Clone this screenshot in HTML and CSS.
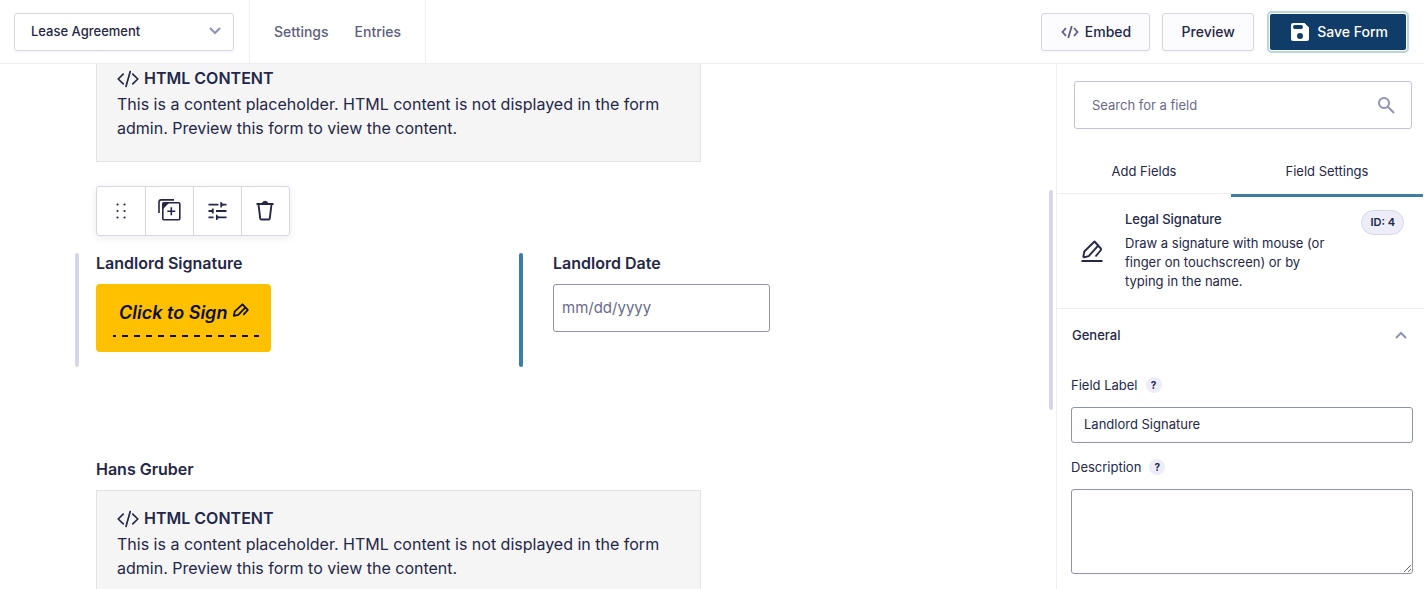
FILE: index.html
```html
<!DOCTYPE html>
<html lang="en">
<head>
<meta charset="utf-8">
<title>Lease Agreement - Form Editor</title>
<link rel="stylesheet" href="styles.css">
</head>
<body>
<svg class="sprite" aria-hidden="true">
  <symbol id="code" viewBox="0 0 22 18"><path d="M6.200 4.200 1.200 9l5 4.800M15.800 4.200l5 4.800-5 4.800M13.200 1.500 9 16.500" fill="none" stroke="currentColor" stroke-width="1.700" stroke-linecap="round" stroke-linejoin="round"/></symbol>
  <symbol id="pen" viewBox="0 0 17 15"><path d="M1.800 12.800 2.800 8.300 10.500 1.300 15.800 6.800 11.800 11.300M1.800 12.800l4.500-1L13 4.800" fill="none" stroke="currentColor" stroke-width="1.800" stroke-linecap="round" stroke-linejoin="round"/></symbol>
</svg>
<header class="topbar">
  <div class="switcher">
    <button class="form-select" type="button">Lease Agreement
      <svg width="12" height="8" viewBox="0 0 12 8"><path d="M1 1l5 5 5-5" fill="none" stroke="#9092b2" stroke-width="2"/></svg>
    </button>
  </div>
  <nav class="topnav">
    <a href="#settings">Settings</a>
    <a href="#entries">Entries</a>
  </nav>
  <div class="actions">
    <button class="btn" type="button"><svg class="btn-code" width="18" height="14" viewBox="0 0 18 14"><path d="M5 3 1.500 7 5 11M13 3l3.500 4L13 11M10.800 1 7.200 13" fill="none" stroke="currentColor" stroke-width="1.800"/></svg>Embed</button>
    <button class="btn" type="button">Preview</button>
    <button class="btn btn-primary" type="button"><svg width="18" height="18" viewBox="0 0 18 18"><path fill="#fff" fill-rule="evenodd" d="M2 0h11.500L18 4.500V16a2 2 0 0 1-2 2H2a2 2 0 0 1-2-2V2a2 2 0 0 1 2-2ZM4 2a2 2 0 0 0 0 4h6a2 2 0 0 0 0-4ZM9 10a3 3 0 1 0 0 6 3 3 0 0 0 0-6Z"/></svg>Save Form</button>
  </div>
</header>
<div class="workspace">
  <main class="canvas">
    <div class="form">
      <section class="html-block">
        <h2><svg width="22" height="18"><use href="#code"/></svg>HTML CONTENT</h2>
        <p>This is a content placeholder. HTML content is not displayed in the form admin. Preview this form to view the content.</p>
      </section>
      <div class="toolbar">
        <button type="button" aria-label="Move"><svg width="24" height="24" viewBox="0 0 24 24" fill="currentColor"><circle cx="8.500" cy="5.500" r="1.100"/><circle cx="15.500" cy="5.500" r="1.100"/><circle cx="8.500" cy="12" r="1.100"/><circle cx="15.500" cy="12" r="1.100"/><circle cx="8.500" cy="18.500" r="1.100"/><circle cx="15.500" cy="18.500" r="1.100"/></svg></button>
        <button type="button" aria-label="Duplicate"><svg width="24" height="24" viewBox="1 1 24 24" fill="none" stroke="currentColor" stroke-width="1.600"><rect x="5.800" y="4.800" width="17" height="17" rx="1"/><path d="M2 15V4Q2 1.900 4.200 1.900H17M14.300 9.300v8M10.300 13.300h8"/><path d="M6 5h6L6 11z" fill="currentColor" stroke="none"/></svg></button>
        <button type="button" aria-label="Settings"><svg width="24" height="24" viewBox="1 0 24 24" fill="none" stroke="currentColor" stroke-width="1.800"><path d="M3.500 5.700h10M17.500 5.700h4M3.500 12h4M11 12h10.500M3.500 18.300h5M12 18.300h9.500"/><path d="M16 3v5.400M8 9.400v5.200M11.700 15.700v5.200" stroke-width="1.400"/><path d="M16 3.300l3 2.400-3 2.400zM8 9.600 5 12l3 2.400zM11.500 16l3 2.300-3 2.300z" fill="currentColor" stroke="none"/></svg></button>
        <button type="button" aria-label="Delete"><svg width="24" height="24" viewBox="1 0 24 24" fill="none" stroke="currentColor" stroke-width="1.900"><path d="M3.500 5h17M5.500 5.500l1.700 13.700Q7.300 20.500 8.500 20.500h7Q16.700 20.500 16.800 19.200L18.500 5.500"/><path d="M8.500 4.500q1-2.800 3.500-2.800t3.500 2.800z" fill="currentColor" stroke="none"/></svg></button>
      </div>
      <div class="field-row">
        <section class="field">
          <h3 id="signature">Landlord Signature</h3>
          <button class="sign" type="button" aria-describedby="signature"><span>Click to Sign <svg width="17" height="15"><use href="#pen"/></svg></span>
            <svg class="dashes" height="2"><line x1="0" y1="1" x2="100%" y2="1" stroke="#0d1030" stroke-width="2" stroke-dasharray="6 6" stroke-dashoffset="3"/></svg>
          </button>
        </section>
        <section class="field active">
          <label for="date">Landlord Date</label>
          <input id="date" type="text" placeholder="mm/dd/yyyy">
        </section>
      </div>
      <h3 class="party">Hans Gruber</h3>
      <section class="html-block">
        <h2><svg width="22" height="18"><use href="#code"/></svg>HTML CONTENT</h2>
        <p>This is a content placeholder. HTML content is not displayed in the form admin. Preview this form to view the content.</p>
      </section>
    </div>
    <div class="thumb"></div>
  </main>
  <aside class="sidebar">
    <div class="search">
      <input type="search" aria-label="Search for a field" placeholder="Search for a field">
      <svg width="18" height="18" viewBox="0 0 18 18" fill="none" stroke="#9092b2" stroke-width="2"><circle cx="7" cy="7" r="5"/><path d="M10.500 10.500 17 17"/></svg>
    </div>
    <div class="tabs" role="tablist">
      <button type="button" role="tab" aria-selected="false">Add Fields</button>
      <button type="button" role="tab" aria-selected="true">Field Settings</button>
    </div>
    <section class="summary">
      <svg width="22" height="24" viewBox="0 0 22 24"><path d="M2.200 17.500 3.300 11.500 13.500 1.500 19.800 8.500 20 10 14.500 16.500M2.200 17.500l5.500-1.300 9-10" fill="none" stroke="currentColor" stroke-width="1.900" stroke-linejoin="round"/><path d="M.5 21h21" stroke="currentColor" stroke-width="2"/></svg>
      <div>
        <h4>Legal Signature</h4>
        <p>Draw a signature with mouse (or finger on touchscreen) or by typing in the name.</p>
      </div>
      <span class="badge">ID: 4</span>
    </section>
    <button class="accordion" type="button" aria-expanded="true">General
      <svg width="12" height="8" viewBox="0 0 12 8"><path d="M1 7l5-5 5 5" fill="none" stroke="#9092b2" stroke-width="2"/></svg>
    </button>
    <div class="settings">
      <div class="label"><label for="field-label">Field Label</label><button type="button" class="help" aria-label="Help">?</button></div>
      <input id="field-label" type="text" value="Landlord Signature">
      <div class="label"><label for="description">Description</label><button type="button" class="help" aria-label="Help">?</button></div>
      <textarea id="description"></textarea>
    </div>
  </aside>
</div>
</body>
</html>
```
FILE: styles.css
```css
* { box-sizing: border-box; }
body {
  margin: 0;
  height: 100vh;
  display: flex;
  flex-direction: column;
  overflow: hidden;
  background: #fff;
  color: #242748;
  font-family: Inter, "Liberation Sans", sans-serif;
  font-size: 13px;
}
button, input, textarea { font: inherit; color: inherit; }
button { cursor: pointer; padding: 0; border: 0; background: none; }
h2, h3, h4, p { margin: 0; }
svg { flex: none; }
.sprite { position: absolute; width: 0; height: 0; }

.topbar {
  flex: none;
  display: flex;
  height: 64px;
  border-bottom: 1px solid #ecedf8;
}
.switcher {
  display: flex;
  align-items: center;
  padding: 0 15px 0 14px;
  border-right: 1px solid #ecedf8;
}
.form-select {
  display: flex;
  align-items: center;
  justify-content: space-between;
  width: 220px;
  height: 38px;
  padding: 0 12px 2px 16px;
  border: 1px solid #d5d7e9;
  border-radius: 3px;
  box-shadow: 0 1px 2px #1214360d;
  font-weight: 500;
}
.topnav {
  display: flex;
  align-items: center;
  gap: 26px;
  padding: 0 24px;
  border-right: 1px solid #ecedf8;
  font-size: 14px;
  font-weight: 500;
}
.topnav a { color: #5b5e80; text-decoration: none; }
.actions {
  display: flex;
  align-items: center;
  gap: 12px;
  margin-left: auto;
  padding-right: 18px;
}
.btn {
  display: flex;
  align-items: center;
  justify-content: center;
  gap: 6px;
  min-width: 92px;
  height: 38px;
  padding: 0 18px;
  border: 1px solid #d5d7e9;
  border-radius: 3px;
  background: #fcfcff;
  box-shadow: 0 1px 2px #1214360d;
  font-size: 14px;
  font-weight: 500;
}
.btn-code { color: #5b5e80; margin-left: 1px; }
.btn-primary {
  gap: 8px;
  height: 36px;
  margin-left: 4px;
  padding: 0 18px 0 21px;
  border: 0;
  border-radius: 2px;
  background: #0f3c69;
  color: #fff;
  box-shadow: 0 0 0 1px #fff, 0 0 0 3px #b8d5ea;
}

.workspace { flex: 1; display: flex; min-height: 0; }
.canvas { position: relative; flex: 1; min-width: 0; overflow: hidden; }
.form { margin-top: -14px; padding: 0 355px 0 96px; }
.thumb {
  position: absolute;
  top: 126px;
  right: 3px;
  width: 4px;
  height: 220px;
  border-radius: 2px;
  background: #d5d7e9;
}
.html-block {
  height: 112px;
  padding: 15px 20px;
  border: 1px solid #e2e2e4;
  background: #f5f5f5;
  font-size: 16px;
  line-height: 24px;
}
.html-block h2 {
  display: flex;
  align-items: center;
  gap: 5px;
  margin-bottom: 2px;
  font-size: 16px;
  font-weight: 600;
}
.html-block h2 svg { margin-top: 2px; }
.toolbar {
  display: inline-flex;
  height: 50px;
  margin: 24px 0 17px;
  border: 1px solid #d5d7e9;
  border-radius: 3px;
  box-shadow: 0 2px 8px #12143614;
}
.toolbar button { display: grid; place-items: center; width: 48px; }
.toolbar button + button { border-left: 1px solid #d5d7e9; }
.field-row {
  display: grid;
  grid-template-columns: 444px 251px;
  margin-left: -21px;
}
.field {
  position: relative;
  display: flex;
  flex-direction: column;
  align-items: flex-start;
  gap: 11px;
  height: 114px;
  padding-left: 21px;
}
.field::before {
  content: "";
  position: absolute;
  inset: 0 auto 0 0;
  width: 4px;
  border-radius: 2px;
  background: #d5d7e9;
}
.field.active { padding-left: 34px; }
.field.active::before { background: #3e7da6; }
h3, .field label { font-size: 16px; font-weight: 600; line-height: 20px; }
.field input {
  width: 217px;
  height: 48px;
  padding: 0 8px 2px;
  border: 1px solid #9092b2;
  border-radius: 3px;
  font-size: 15px;
}
input::placeholder { color: #686a8b; opacity: 1; }
.sign {
  width: 175px;
  height: 68px;
  padding: 10px 12px 8px 17px;
  border-radius: 4px;
  background: #ffc000;
  color: #0d1030;
  font-size: 18px;
  font-style: italic;
  font-weight: 600;
}
.sign span { display: block; padding-right: 4px; line-height: 24px; }
.sign span svg { vertical-align: 1px; }
.sign .dashes { display: block; width: 100%; margin-top: 10px; }
.party { margin: 92px 0 11px; }

.sidebar {
  flex: none;
  width: 368px;
  border-left: 1px solid #ecedf8;
}
.search {
  display: flex;
  align-items: center;
  height: 48px;
  margin: 17px 12px 0 17px;
  padding: 0 16px 0 17px;
  border: 1px solid #c2c3db;
  border-radius: 3px;
}
.search input {
  flex: 1;
  min-width: 0;
  padding: 0;
  border: 0;
  outline: 0;
  background: none;
}
.tabs {
  display: grid;
  grid-template-columns: 174fr 192fr;
  height: 68px;
  padding-right: 1px;
}
.tabs button { padding-top: 20px; border-bottom: 1px solid #ecedf8; margin-bottom: 3px; }
.tabs [aria-selected="true"] { margin-bottom: 0; padding-top: 18px; border-bottom: 3px solid #3e7da6; }
.summary {
  display: flex;
  align-items: flex-start;
  height: 112px;
  padding: 13px 20px 0 24px;
  border-bottom: 1px solid #ecedf8;
}
.summary > svg { margin-top: 30px; }
.summary > div { flex: 1; padding: 0 32px 0 22px; }
.summary h4 { margin-bottom: 5px; font-size: 13px; font-weight: 500; line-height: 19px; }
.summary p { line-height: 19px; }
.badge {
  padding: 0 8px;
  border: 1px solid #d5d7e9;
  border-radius: 13px;
  background: #ecedf8;
  font-size: 11px;
  font-weight: 600;
  line-height: 23px;
}
.accordion {
  display: flex;
  align-items: center;
  justify-content: space-between;
  width: 100%;
  height: 52px;
  padding: 0 17px 0 15px;
  font-weight: 500;
}
.settings { padding: 16px 11px 0 14px; }
.label { display: flex; align-items: center; gap: 8px; height: 16px; margin-bottom: 14px; }
.help {
  width: 16px;
  height: 16px;
  border-radius: 50%;
  background: #ecedf8;
  font-size: 10px;
  font-weight: 700;
}
.settings input, .settings textarea {
  display: block;
  width: 100%;
  border: 1px solid #9092b2;
  border-radius: 3px;
  padding: 0 12px;
}
.settings input { height: 36px; margin-bottom: 16px; padding-bottom: 2px; }
.settings textarea { height: 85px; }
```
